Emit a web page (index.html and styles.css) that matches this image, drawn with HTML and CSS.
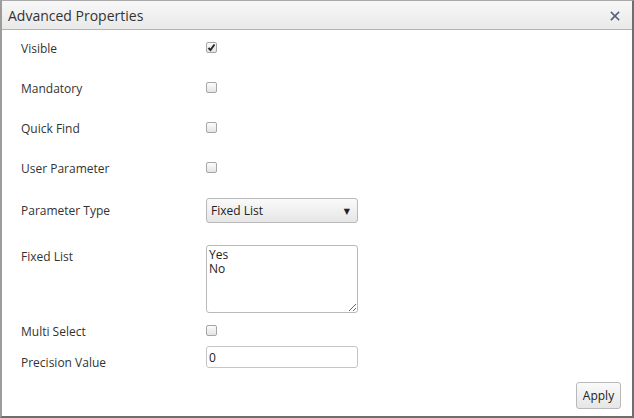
FILE: index.html
```html
<!DOCTYPE html>
<html>
<head>
<meta charset="utf-8">
<link rel="stylesheet" href="styles.css">
</head>
<body>
<div class="dialog">
  <div class="titlebar">
    <span class="title">Advanced Properties</span>
    <svg class="close" width="10" height="10" viewBox="0 0 10 10"><path d="M1.5 1.5 L8.5 8.5 M8.5 1.5 L1.5 8.5" stroke="#56607a" stroke-width="1.7" stroke-linecap="square"/></svg>
  </div>
  <div class="form">
    <div class="row row-cb"><label class="lbl">Visible</label><span class="cb checked"><svg width="9" height="9" viewBox="0 0 9 9"><path d="M1.5 5 L3.5 7 L7.5 1.5" stroke="#2a2a2a" stroke-width="2" fill="none"/></svg></span></div>
    <div class="row row-cb"><label class="lbl">Mandatory</label><span class="cb"></span></div>
    <div class="row row-cb"><label class="lbl">Quick Find</label><span class="cb"></span></div>
    <div class="row row-cb"><label class="lbl">User Parameter</label><span class="cb"></span></div>
    <div class="row row-select"><label class="lbl">Parameter Type</label>
      <div class="select"><span>Fixed List</span><span class="arrow">▼</span></div>
    </div>
    <div class="row row-list"><label class="lbl">Fixed List</label>
      <textarea class="list">Yes
No</textarea>
    </div>
    <div class="row row-multi row-cb"><label class="lbl">Multi Select</label><span class="cb"></span></div>
    <div class="row row-prec"><label class="lbl">Precision Value</label><input class="text" type="text" value="0"></div>
  </div>
  <div class="footer"><button class="btn">Apply</button></div>
</div>
</body>
</html>
```
FILE: styles.css
```css
html, body { margin: 0; padding: 0; background: #fff; }
body { font-family: "Open Sans", "DejaVu Sans", sans-serif; color: #333; }
.dialog {
  box-sizing: border-box;
  width: 634px; height: 418px;
  border-top: 1px solid #a9a9a9;
  border-left: 2px solid #9c9c9c;
  border-right: 2px solid #6e6e6e;
  border-bottom: 2px solid #6e6e6e;
  background: #fff;
}
.titlebar {
  height: 28px;
  border-bottom: 1px solid #b4b4b4;
  background: linear-gradient(#f7f7f7, #e9e9e9);
  display: flex; align-items: center; justify-content: space-between;
  padding: 0 12px 0 6px;
}
.title { font-size: 14px; color: #333; }
.close { display: block; margin-top: 1px; }
.form { padding-left: 19px; }
.row { display: flex; align-items: center; height: 34px; margin-top: 6px; }
.row:first-child { margin-top: 0; }
.lbl { width: 185px; font-size: 12px; line-height: 16px; color: #333; }
.row-cb .lbl { padding-top: 4px; }
.cb {
  box-sizing: border-box; width: 11px; height: 11px;
  border: 1px solid #a5a5a5; border-radius: 2px;
  background: linear-gradient(#fbfbfb, #e4e4e4);
  display: flex; align-items: center; justify-content: center;
}
.cb svg { display: block; }
.row-select { height: 41px; }
.select {
  box-sizing: border-box; width: 152px; height: 25px;
  border: 1px solid #b9b9b9; border-radius: 3px;
  background: linear-gradient(#fafafa, #e6e6e6);
  display: flex; align-items: center; justify-content: space-between;
  padding: 0 7px 0 4px; font-size: 12px; color: #222;
}
.arrow { font-size: 8px; color: #222; }
.row-list { height: 68px; margin-top: 14px; align-items: flex-start; }
.row-list .lbl { padding-top: 4px; }
.list {
  box-sizing: border-box; width: 152px; height: 68px; margin: 0;
  border: 1px solid #b9b9b9; border-radius: 3px;
  font-family: "Open Sans", "DejaVu Sans", sans-serif; font-size: 12px; line-height: 14px;
  padding: 2px 2px; color: #222; resize: both;
}
.row-multi { height: 22px; margin-top: 6px; }
.row-prec { height: 22px; margin-top: 5px; align-items: flex-start; }
.row-prec .lbl { padding-top: 9px; }
.text {
  box-sizing: border-box; width: 152px; height: 22px; margin: 0;
  border: 1px solid #c4c4c4; border-radius: 3px;
  font-family: "Open Sans", "DejaVu Sans", sans-serif; font-size: 12px;
  padding: 0 2px; color: #222; outline: none;
}
.footer { display: flex; justify-content: flex-end; padding-right: 11px; margin-top: 14px; }
.btn {
  box-sizing: border-box; width: 45px; height: 27px;
  border: 1px solid #b9b9b9; border-radius: 3px;
  background: linear-gradient(#fafafa, #e6e6e6);
  font-family: "Open Sans", "DejaVu Sans", sans-serif; font-size: 12px; color: #222; padding: 0;
}
```
